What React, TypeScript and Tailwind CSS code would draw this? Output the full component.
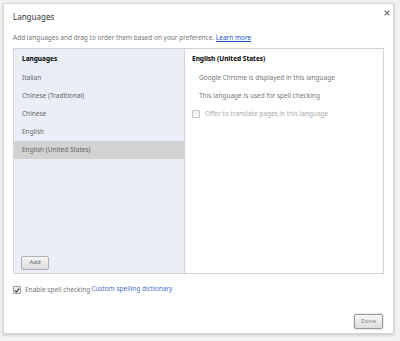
import { X } from "lucide-react";

const languages = [
  "Italian",
  "Chinese (Traditional)",
  "Chinese",
  "English",
  "English (United States)",
];

export default function App() {
  return (
    <div
      className="w-[400px] h-[341px] bg-[#f2f2f2] p-[3px] pr-[6px] pb-[7px]"
      style={{ fontFamily: "'Noto Sans', 'Open Sans', sans-serif" }}
    >
      <div className="relative flex h-full flex-col bg-white border border-[#d6d6d6] shadow-[0_1px_3px_rgba(0,0,0,0.2)] px-[9px]">
        <button className="absolute right-[2px] top-[5px] text-[#777]">
          <X className="w-[8px] h-[8px]" strokeWidth={3.5} />
        </button>
        <div className="pt-[8px] text-[8px] leading-[10px] text-[#333]">Languages</div>
        <div className="mt-[11px] text-[6.5px] leading-[10px] text-[#777]">
          Add languages and drag to order them based on your preference.{" "}
          <a className="text-[#1a55c9] underline">Learn more</a>
        </div>

        <div className="mt-[5px] flex h-[226px] border border-[#d4d4d4]">
          <div className="flex w-[171px] flex-col bg-[#e9eef8] border-r border-[#d4d4d4]">
            <div className="px-[8px] h-[20px] flex items-center text-[6.5px] font-bold text-black">
              Languages
            </div>
            {languages.map((lang, i) => (
              <div
                key={lang}
                className={
                  "px-[8px] h-[18px] flex items-center text-[6.5px] text-[#666] " +
                  (i === languages.length - 1 ? "bg-[#d2d2d2]" : "")
                }
              >
                {lang}
              </div>
            ))}
            <div className="flex-1" />
            <div className="px-[7px] pb-[3px]">
              <button className="h-[14px] w-[28px] rounded-[2px] border border-[#b0b0b0] bg-gradient-to-b from-[#f4f4f4] to-[#dcdcdc] text-[6px] text-[#666]">
                Add
              </button>
            </div>
          </div>
          <div className="flex-1 px-[7px]">
            <div className="h-[20px] flex items-center text-[6.5px] font-bold text-black">
              English (United States)
            </div>
            <div className="pl-[7px] h-[18px] flex items-center text-[6.5px] text-[#777]">
              Google Chrome is displayed in this language
            </div>
            <div className="pl-[7px] h-[18px] flex items-center text-[6.5px] text-[#777]">
              This language is used for spell checking
            </div>
            <div className="h-[18px] flex items-center gap-[5px] text-[6.5px] text-[#aaa]">
              <span className="w-[8px] h-[8px] border border-[#c4c4c4] bg-[#f4f4f4] rounded-[1px]" />
              Offer to translate pages in this language
            </div>
          </div>
        </div>

        <div className="mt-[11px] flex items-center gap-[4px] text-[6.5px] leading-[10px]">
          <span className="flex w-[8px] h-[8px] items-center justify-center border border-[#999] bg-[#eee] rounded-[1px]">
            <svg viewBox="0 0 8 8" className="w-[7px] h-[7px]">
              <path d="M1.2 4.2 L3.2 6 L6.8 1.6" stroke="#222" strokeWidth="1.4" fill="none" />
            </svg>
          </span>
          <span className="text-[#777]">Enable spell checking</span>
          <a className="text-[#4a6fc9] -ml-[3px] -mt-[3px]">Custom spelling dictionary</a>
        </div>

        <div className="flex-1" />
        <div className="flex justify-end pb-[4px] pr-[1px]">
          <button className="h-[15px] w-[29px] rounded-[2px] border border-[#999] bg-gradient-to-b from-[#f6f6f6] to-[#dedede] text-[6px] text-[#888] shadow-[0_0_0_1px_#e8e8e8]">
            Done
          </button>
        </div>
      </div>
    </div>
  );
}
